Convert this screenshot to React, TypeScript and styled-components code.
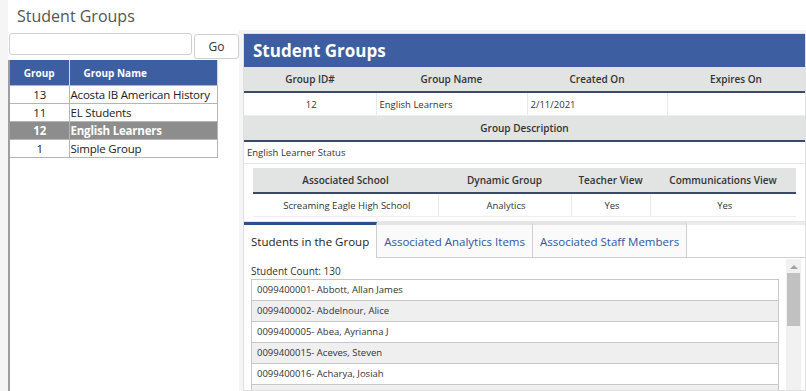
import React from 'react'
import styled, { createGlobalStyle } from 'styled-components'

const GlobalStyle = createGlobalStyle`
  html, body {
    margin: 0;
    padding: 0;
    background: #f5f5f5;
    font-family: "Open Sans", "DejaVu Sans", sans-serif;
    overflow: hidden;
  }
`

const groups = [
  { id: 13, name: 'Acosta IB American History' },
  { id: 11, name: 'EL Students' },
  { id: 12, name: 'English Learners', selected: true },
  { id: 1, name: 'Simple Group' }
]

const students = [
  '0099400001- Abbott, Allan James',
  '0099400002- Abdelnour, Alice',
  '0099400005- Abea, Ayrianna J',
  '0099400015- Aceves, Steven',
  '0099400016- Acharya, Josiah',
  '0099400017- Adams, Brooke'
]

export default function App() {
  return (
    <>
      <GlobalStyle />
      <Page>
        <PageTitle>Student Groups</PageTitle>
        <Columns>
          <LeftPanel>
            <SearchRow>
              <SearchInput type="text" />
              <GoButton>Go</GoButton>
            </SearchRow>
            <GroupListBox>
              <GroupTable>
                <colgroup>
                  <col style={{ width: 59 }} />
                  <col />
                </colgroup>
                <thead>
                  <tr>
                    <GroupHead>Group</GroupHead>
                    <GroupHead $left>Group Name</GroupHead>
                  </tr>
                </thead>
                <tbody>
                  {groups.map(g => (
                    <GroupRow key={g.id} $selected={g.selected}>
                      <GroupCell $center>{g.id}</GroupCell>
                      <GroupCell>{g.name}</GroupCell>
                    </GroupRow>
                  ))}
                </tbody>
              </GroupTable>
            </GroupListBox>
          </LeftPanel>

          <RightPanel>
            <PanelHeader>Student Groups</PanelHeader>
            <InfoTable>
              <colgroup>
                <col style={{ width: 132 }} />
                <col style={{ width: 151 }} />
                <col style={{ width: 140 }} />
                <col />
              </colgroup>
              <thead>
                <tr>
                  <InfoHead>Group ID#</InfoHead>
                  <InfoHead>Group Name</InfoHead>
                  <InfoHead>Created On</InfoHead>
                  <InfoHead>Expires On</InfoHead>
                </tr>
              </thead>
              <tbody>
                <tr>
                  <InfoCell $center>12</InfoCell>
                  <InfoCell>English Learners</InfoCell>
                  <InfoCell>2/11/2021</InfoCell>
                  <InfoCell />
                </tr>
                <tr>
                  <InfoHead colSpan={4}>Group Description</InfoHead>
                </tr>
                <tr>
                  <DescCell colSpan={4}>English Learner Status</DescCell>
                </tr>
              </tbody>
            </InfoTable>

            <NestedWrap>
              <InfoTable>
                <colgroup>
                  <col style={{ width: 185 }} />
                  <col style={{ width: 133 }} />
                  <col style={{ width: 79 }} />
                  <col />
                </colgroup>
                <thead>
                  <tr>
                    <InfoHead>Associated School</InfoHead>
                    <InfoHead>Dynamic Group</InfoHead>
                    <InfoHead>Teacher View</InfoHead>
                    <InfoHead>Communications View</InfoHead>
                  </tr>
                </thead>
                <tbody>
                  <tr>
                    <InfoCell $center>Screaming Eagle High School</InfoCell>
                    <InfoCell $center>Analytics</InfoCell>
                    <InfoCell $center>Yes</InfoCell>
                    <InfoCell $center>Yes</InfoCell>
                  </tr>
                </tbody>
              </InfoTable>
            </NestedWrap>

            <TabBar>
              <Tab $active>Students in the Group</Tab>
              <Tab>Associated Analytics Items</Tab>
              <Tab>Associated Staff Members</Tab>
              <TabFiller />
            </TabBar>

            <TabBody>
              <ListArea>
                <CountLabel>Student Count: 130</CountLabel>
                <StudentList>
                  {students.map((s, i) => (
                    <StudentRow key={s} $odd={i % 2 === 1}>
                      {s}
                    </StudentRow>
                  ))}
                </StudentList>
              </ListArea>
              <ScrollTrack>
                <ScrollArrow />
                <ScrollThumb />
              </ScrollTrack>
            </TabBody>
          </RightPanel>
        </Columns>
      </Page>
    </>
  )
}

const Page = styled.div`
  width: 806px;
  height: 391px;
  display: flex;
  flex-direction: column;
`

const PageTitle = styled.div`
  margin-left: 8px;
  height: 30px;
  padding: 5px 0 0 9px;
  box-sizing: border-box;
  background: #fff;
  font-size: 16px;
  color: #555;
`

const Columns = styled.div`
  flex: 1;
  display: flex;
  gap: 4px;
  min-height: 0;
`

const LeftPanel = styled.div`
  margin-left: 8px;
  width: 231px;
  background: #fff;
  display: flex;
  flex-direction: column;
`

const SearchRow = styled.div`
  display: flex;
  align-items: flex-start;
  gap: 2px;
  padding: 3px 0 0 1px;
  height: 30px;
  box-sizing: border-box;
`

const SearchInput = styled.input`
  width: 183px;
  height: 22px;
  box-sizing: border-box;
  border: 1px solid #d0d0d0;
  border-radius: 3px;
  outline: none;
`

const GoButton = styled.button`
  width: 45px;
  height: 25px;
  margin-top: 1px;
  background: #fff;
  border: 1px solid #cfcfcf;
  border-radius: 3px;
  font-family: "Open Sans", sans-serif;
  font-size: 12px;
  color: #333;
  padding: 0;
`

const GroupListBox = styled.div`
  flex: 1;
  border-left: 2px solid #9e9e9e;
`

const GroupTable = styled.table`
  width: 208px;
  border-collapse: collapse;
  table-layout: fixed;
`

const GroupHead = styled.th<{ $left?: boolean }>`
  height: 25px;
  padding: ${p => (p.$left ? '0 0 0 14px' : '0')};
  background: #3d5ea1;
  color: #fff;
  font-size: 10px;
  font-weight: 700;
  border-right: 1px solid #d8d8d8;
  text-align: ${p => (p.$left ? 'left' : 'center')};
`

const GroupRow = styled.tr<{ $selected?: boolean }>`
  background: ${p => (p.$selected ? '#8d8d8d' : '#fff')};
  color: ${p => (p.$selected ? '#fff' : '#222')};
  font-weight: ${p => (p.$selected ? 700 : 400)};
`

const GroupCell = styled.td<{ $center?: boolean }>`
  height: 17px;
  padding: 0 0 0 1px;
  font-size: 11.5px;
  letter-spacing: -0.2px;
  line-height: 17px;
  white-space: nowrap;
  overflow: hidden;
  text-align: ${p => (p.$center ? 'center' : 'left')};
  border: 1px solid #b5b5b5;
  border-left: none;
`

const RightPanel = styled.div`
  flex: 1;
  background: #fff;
  border: 1px solid #e0e0e0;
  margin-top: 3px;
  display: flex;
  flex-direction: column;
  min-width: 0;
`

const PanelHeader = styled.div`
  height: 33px;
  padding-left: 9px;
  display: flex;
  align-items: center;
  background: #3d5ea1;
  color: #fff;
  font-size: 17px;
  font-weight: 700;
`

const InfoTable = styled.table`
  width: 100%;
  border-collapse: collapse;
  table-layout: fixed;
`

const InfoHead = styled.th`
  height: 24px;
  padding: 0;
  background: #e2e3e3;
  color: #333;
  font-size: 10px;
  font-weight: 600;
  text-align: center;
  border-bottom: 2px solid #3a4a68;
`

const InfoCell = styled.td<{ $center?: boolean }>`
  height: 22px;
  padding: 0 0 0 3px;
  font-size: 9.5px;
  color: #333;
  white-space: nowrap;
  text-align: ${p => (p.$center ? 'center' : 'left')};
  border-right: 1px solid #e6eaee;
  border-bottom: 1px solid #eeeeee;

  &:last-child {
    border-right: none;
  }
`

const DescCell = styled.td`
  height: 21px;
  padding: 0 0 0 3px;
  font-size: 9.5px;
  color: #333;
  border-bottom: 1px solid #e6e6e6;
`

const NestedWrap = styled.div`
  padding: 4px 9px 4px 9px;
`

const TabBar = styled.div`
  display: flex;
  height: 35px;
  border-top: 1px solid #e6e6e6;
  border-bottom: 1px solid #cfcfcf;
`

const Tab = styled.div<{ $active?: boolean }>`
  display: flex;
  align-items: center;
  padding: 0 7px;
  font-size: 11.5px;
  color: ${p => (p.$active ? '#222' : '#2e57a6')};
  background: ${p => (p.$active ? '#fff' : '#fafafa')};
  border-top: ${p => (p.$active ? '3px solid #2d4f8e' : '3px solid #e4e4e4')};
  border-right: 1px solid #cfcfcf;
  margin-bottom: ${p => (p.$active ? '-1px' : '0')};
`

const TabFiller = styled.div`
  flex: 1;
  border-top: 3px solid #ececec;
`

const TabBody = styled.div`
  flex: 1;
  display: flex;
  min-height: 0;
  padding: 5px 4px 0 7px;
  overflow: hidden;
`

const ListArea = styled.div`
  flex: 1;
  padding-right: 7px;
  min-width: 0;
`

const CountLabel = styled.div`
  font-size: 10px;
  color: #333;
  height: 16px;
  line-height: 16px;
`

const StudentList = styled.div`
  border: 1px solid #c8c8c8;
  border-bottom: none;
`

const StudentRow = styled.div<{ $odd?: boolean }>`
  height: 20px;
  line-height: 20px;
  padding-left: 5px;
  font-size: 9.5px;
  color: #333;
  background: ${p => (p.$odd ? '#efefef' : '#fff')};
  border-bottom: 1px solid #c8c8c8;
`

const ScrollTrack = styled.div`
  width: 15px;
  margin-top: -4px;
  background: #f1f1f1;
  display: flex;
  flex-direction: column;
  align-items: center;
`

const ScrollArrow = styled.div`
  margin-top: 6px;
  width: 0;
  height: 0;
  border-left: 4px solid transparent;
  border-right: 4px solid transparent;
  border-bottom: 4px solid #a3a3a3;
`

const ScrollThumb = styled.div`
  margin-top: 4px;
  width: 13px;
  height: 53px;
  background: #c1c1c1;
`
